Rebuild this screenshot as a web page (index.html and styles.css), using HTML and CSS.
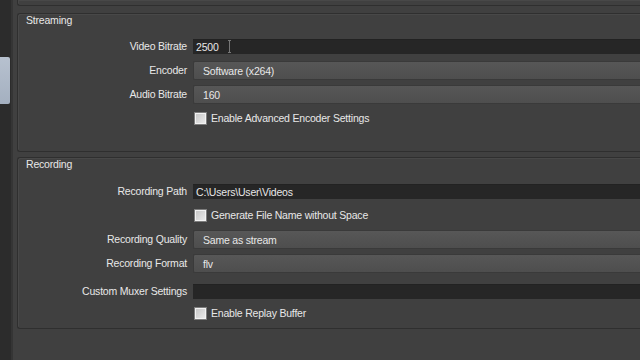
FILE: index.html
```html
<!DOCTYPE html>
<html>
<head>
	<meta name="viewport" content="width=device-width, initial-scale=1.0">
	<link rel="stylesheet" href="styles.css">
	<title>Output Settings</title>
</head>
<body>
<div class="app">
	<div class="sidebar">
		<div class="nub"></div>
	</div>
	<div class="content">
		<div class="group prev"></div>

		<div class="group streaming">
			<div class="group-title">Streaming</div>
			<div class="row">
				<label class="label">Video Bitrate</label>
				<div class="field input">2500<span class="ibeam"></span></div>
			</div>
			<div class="row">
				<label class="label">Encoder</label>
				<div class="field combo">Software (x264)</div>
			</div>
			<div class="row">
				<label class="label">Audio Bitrate</label>
				<div class="field combo">160</div>
			</div>
			<div class="row">
				<span class="label"></span>
				<div class="check"><span class="box"></span>Enable Advanced Encoder Settings</div>
			</div>
		</div>

		<div class="group recording">
			<div class="group-title">Recording</div>
			<div class="row">
				<label class="label">Recording Path</label>
				<div class="field input">C:\Users\User\Videos</div>
			</div>
			<div class="row">
				<span class="label"></span>
				<div class="check"><span class="box"></span>Generate File Name without Space</div>
			</div>
			<div class="row">
				<label class="label">Recording Quality</label>
				<div class="field combo">Same as stream</div>
			</div>
			<div class="row">
				<label class="label">Recording Format</label>
				<div class="field combo">flv</div>
			</div>
			<div class="row muxer">
				<label class="label">Custom Muxer Settings</label>
				<div class="field input"></div>
			</div>
			<div class="row">
				<span class="label"></span>
				<div class="check"><span class="box"></span>Enable Replay Buffer</div>
			</div>
		</div>
	</div>
</div>
</body>
</html>
```

FILE: styles.css
```css
	body {
		margin: 0;
		background-color: #404040;
		color: #e8e8e8;
		font-family: "Liberation Sans", Arial, sans-serif;
		font-size: 10.5px;
		letter-spacing: -0.2px;
		overflow: hidden;
	}

	.app {
		display: flex;
		height: 360px;
	}

	.sidebar {
		width: 11px;
		background-color: #2c2c2c;
		border-right: 2px solid #353535;
		flex-shrink: 0;
	}

	.nub {
		margin-top: 57px;
		height: 47px;
		width: 10px;
		background: linear-gradient(#b7c1cf, #a4b0c0);
		border-radius: 0 2px 2px 0;
	}

	.content {
		flex: 1;
		padding-left: 4px;
	}

	.group {
		border: 1px solid #2f2f2f;
		border-right: none;
		border-radius: 3px 0 0 3px;
		box-shadow: inset 1px 1px 0 #484848;
		background-color: #404040;
	}

	.prev {
		height: 5px;
		border-top: none;
		border-radius: 0 0 0 3px;
		margin-bottom: 7px;
	}

	.streaming {
		padding-bottom: 23px;
	}

	.recording {
		margin-top: 5px;
		padding-bottom: 5px;
	}

	.group-title {
		padding-left: 8px;
		height: 13px;
		line-height: 13px;
		margin-bottom: 9px;
	}

	.recording .group-title {
		margin-bottom: 10px;
	}

	.row {
		display: flex;
		align-items: center;
		height: 20px;
		margin-bottom: 4px;
	}

	.row:last-child {
		margin-bottom: 0;
	}

	.row.muxer {
		margin-top: 8px;
		margin-bottom: 2px;
	}

	.label {
		width: 169px;
		flex-shrink: 0;
		text-align: right;
		padding-right: 6px;
	}

	.field {
		flex: 1;
		box-sizing: border-box;
		white-space: nowrap;
	}

	.input {
		position: relative;
		height: 15px;
		line-height: 14px;
		background-color: #262626;
		border-top: 1px solid #222;
		padding-left: 3px;
	}

	.combo {
		height: 19px;
		line-height: 18px;
		padding-left: 9px;
		background: linear-gradient(#575757, #4e4e4e);
		border: 1px solid #3a3a3a;
		border-right: none;
		border-radius: 2px 0 0 2px;
	}

	.check {
		display: flex;
		align-items: center;
		margin-left: 1px;
	}

	.box {
		width: 11px;
		height: 11px;
		margin-right: 4px;
		border: 1px solid #7d7d7d;
		background: linear-gradient(135deg, #c4c4c4, #ececec);
		box-shadow: inset 0 0 0 1px #f2f2f2;
	}

	.ibeam {
		position: absolute;
		left: 35px;
		top: 0;
		width: 3px;
		height: 13px;
		border-top: 1px solid #777;
		border-bottom: 1px solid #777;
		box-sizing: border-box;
	}

	.ibeam::after {
		content: "";
		position: absolute;
		left: 1px;
		top: 0;
		width: 1px;
		height: 11px;
		background-color: #777;
	}
```
